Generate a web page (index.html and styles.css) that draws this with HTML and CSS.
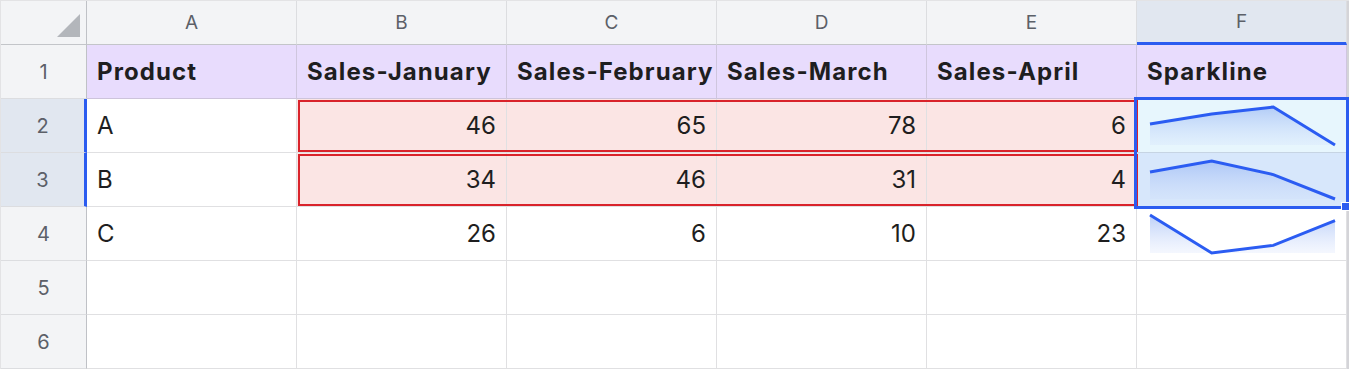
FILE: index.html
```html
<!DOCTYPE html>
<html lang="en">
<head>
<meta charset="UTF-8" />
<meta name="viewport" content="width=device-width, initial-scale=1" />
<title>Sales Sparklines</title>
<link rel="stylesheet" href="styles.css">
</head>
<body>
  <div class="sheet">
    <div class="grid">
      <!-- column headers -->
      <div class="head corner"><span class="corner-mark"></span></div>
      <div class="head col-head">A</div>
      <div class="head col-head">B</div>
      <div class="head col-head">C</div>
      <div class="head col-head">D</div>
      <div class="head col-head">E</div>
      <div class="head col-head active">F</div>

      <!-- row 1: titles -->
      <div class="head row-head">1</div>
      <div class="cell title">Product</div>
      <div class="cell title">Sales-January</div>
      <div class="cell title">Sales-February</div>
      <div class="cell title">Sales-March</div>
      <div class="cell title">Sales-April</div>
      <div class="cell title">Sparkline</div>

      <!-- row 2 -->
      <div class="head row-head active">2</div>
      <div class="cell">A</div>
      <div class="cell num flagged">46</div>
      <div class="cell num flagged">65</div>
      <div class="cell num flagged">78</div>
      <div class="cell num flagged">6</div>
      <div class="cell spark sel-first" data-values="46,65,78,6"></div>

      <!-- row 3 -->
      <div class="head row-head active">3</div>
      <div class="cell">B</div>
      <div class="cell num flagged">34</div>
      <div class="cell num flagged">46</div>
      <div class="cell num flagged">31</div>
      <div class="cell num flagged">4</div>
      <div class="cell spark sel-rest" data-values="34,46,31,4"></div>

      <!-- row 4 -->
      <div class="head row-head">4</div>
      <div class="cell">C</div>
      <div class="cell num">26</div>
      <div class="cell num">6</div>
      <div class="cell num">10</div>
      <div class="cell num">23</div>
      <div class="cell spark" data-values="26,6,10,23"></div>

      <!-- rows 5-6: empty -->
      <div class="head row-head">5</div>
      <div class="cell"></div><div class="cell"></div><div class="cell"></div>
      <div class="cell"></div><div class="cell"></div><div class="cell"></div>
      <div class="head row-head">6</div>
      <div class="cell"></div><div class="cell"></div><div class="cell"></div>
      <div class="cell"></div><div class="cell"></div><div class="cell"></div>
    </div>

    <!-- conditional format outlines and the current selection -->
    <div class="flag-box flag-row-2"></div>
    <div class="flag-box flag-row-3"></div>
    <div class="selection"><span class="fill-handle"></span></div>
  </div>

<script>
  // Draw a small line chart into every sparkline cell
  const SVG_NS = 'http://www.w3.org/2000/svg';
  const sparkCells = document.querySelectorAll('.spark');

  sparkCells.forEach((cell, idx) => {
    const values = cell.dataset.values.split(',').map(Number);
    const min = Math.min(...values);
    const max = Math.max(...values);
    const left = 13, right = 198, top = 8, bottom = 46;
    const step = (right - left) / (values.length - 1);

    const points = values.map((v, i) => {
      const x = left + i * step;
      const y = top + (max - v) / (max - min) * (bottom - top);
      return [x.toFixed(1), y.toFixed(1)];
    });

    const svg = document.createElementNS(SVG_NS, 'svg');
    svg.setAttribute('width', '209');
    svg.setAttribute('height', '53');
    svg.setAttribute('viewBox', '0 0 209 53');

    const gradId = 'spark-fill-' + idx;
    svg.innerHTML = `
      <defs>
        <linearGradient id="${gradId}" x1="0" y1="0" x2="0" y2="1">
          <stop offset="0" stop-color="#8fb0f3" stop-opacity="0.6" />
          <stop offset="1" stop-color="#c9d8fb" stop-opacity="0.2" />
        </linearGradient>
      </defs>`;

    const area = document.createElementNS(SVG_NS, 'polygon');
    const areaPts = points.map(p => p.join(',')).join(' ')
      + ` ${right},${bottom} ${left},${bottom}`;
    area.setAttribute('points', areaPts);
    area.setAttribute('fill', `url(#${gradId})`);
    svg.appendChild(area);

    const line = document.createElementNS(SVG_NS, 'polyline');
    line.setAttribute('points', points.map(p => p.join(',')).join(' '));
    line.setAttribute('class', 'spark-line');
    svg.appendChild(line);

    cell.appendChild(svg);
  });
</script>
</body>
</html>
```

FILE: styles.css
```css
/* Base */
* {
  margin: 0;
  padding: 0;
  box-sizing: border-box;
}
body {
  background: #fff;
  font-family: Inter, 'Liberation Sans', sans-serif;
  color: #1e1e20;
}

/* Sheet frame */
.sheet {
  position: relative;
  width: 1349px;
  border-top: 1px solid #e3e3e5;
  border-left: 1px solid #e3e3e5;
}
.grid {
  display: grid;
  grid-template-columns: 86px repeat(6, 210px);
  grid-template-rows: 44px repeat(6, 54px);
  border-right: 2px solid #d4d4d8;
}

/* Headers */
.head {
  display: flex;
  align-items: center;
  justify-content: center;
  background: #f3f4f6;
  color: #5c6068;
  border-right: 1px solid #dcdde0;
  border-bottom: 1px solid #dcdde0;
}
.col-head {
  font-size: 19px;
  border-bottom-color: #c3c5c9;
}
.corner {
  justify-content: flex-end;
  align-items: flex-end;
  padding: 0 6px 7px 0;
  border-right-color: #bfc1c6;
  border-bottom-color: #c3c5c9;
}
.corner-mark {
  width: 23px;
  height: 23px;
  background: #b3b6bb;
  clip-path: polygon(100% 0, 100% 100%, 0 100%);
}
.col-head.active {
  background: #e1e7f0;
  border-bottom: 3px solid #2b5cf0;
}
.row-head {
  font-size: 20px;
  border-right-color: #bfc1c6;
}
.row-head.active {
  background: #e1e7f0;
  border-right: 3px solid #2b5cf0;
}

/* Body cells */
.cell {
  display: flex;
  align-items: center;
  padding: 0 10px;
  font-size: 24px;
  border-right: 1px solid #e0e0e2;
  border-bottom: 1px solid #e0e0e2;
  white-space: nowrap;
  overflow: hidden;
}
.cell.title {
  background: #e8dcfd;
  font-weight: 700;
  letter-spacing: 1.1px;
  border-right-color: #cfc6de;
  border-bottom-color: #cdc4db;
}
.cell.num {
  justify-content: flex-end;
}
.cell.flagged {
  background: #fbe5e4;
}

/* Sparkline cells */
.cell.spark {
  padding: 0;
  align-items: stretch;
}
.cell.spark svg {
  display: block;
}
.spark-line {
  fill: none;
  stroke: #2b5cf2;
  stroke-width: 3;
  stroke-linejoin: miter;
}
.cell.sel-first {
  background: #e7f6fd;
  border-bottom-color: #c6d4e3;
}
.cell.sel-rest {
  background: #d7e7fb;
}

/* Overlays */
.flag-box {
  position: absolute;
  left: 297px;
  width: 840px;
  height: 52px;
  border: 2px solid #d9232b;
  pointer-events: none;
}
.flag-row-2 { top: 99px; }
.flag-row-3 { top: 153px; }

.selection {
  position: absolute;
  left: 1133px;
  top: 96px;
  width: 215px;
  height: 112px;
  border: 3px solid #2b5cf0;
  pointer-events: none;
}
.fill-handle {
  position: absolute;
  right: -4px;
  bottom: -5px;
  width: 9px;
  height: 9px;
  background: #2b5cf0;
  border: 1px solid #fff;
}
```
